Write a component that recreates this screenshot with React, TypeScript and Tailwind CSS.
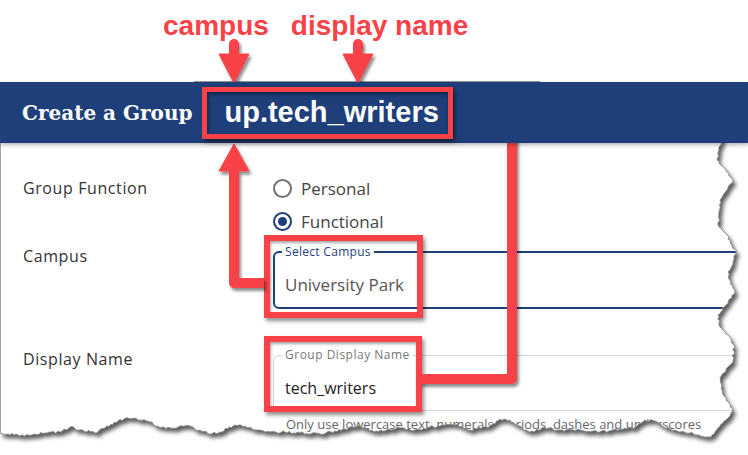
import React from 'react';

function rng(seed: number) {
  let s = seed;
  return () => {
    s = (s * 16807) % 2147483647;
    return (s - 1) / 2147483646;
  };
}

const rightAnchors: [number, number][] = [
  [737, 82], [734, 92], [729, 100], [724, 108], [717, 118], [719, 128], [722, 140], [719, 150],
  [717, 160], [726, 170], [733, 180], [727, 190], [720, 200], [719, 212], [718, 225], [727, 235],
  [732, 245], [736, 252], [733, 262], [728, 272], [731, 282], [735, 292], [726, 305], [718, 315],
  [719, 325], [728, 335], [734, 345], [733, 360], [726, 370], [720, 378], [722, 390], [726, 400],
  [733, 410], [728, 418], [718, 428], [711, 437],
];

const bottomAnchors: [number, number][] = [
  [711, 437], [690, 433], [675, 430], [662, 426], [655, 421], [645, 420], [636, 427], [620, 429],
  [600, 432], [580, 430], [560, 430], [545, 428], [530, 432], [518, 426], [510, 420], [500, 419],
  [490, 426], [470, 430], [455, 425], [440, 426], [430, 427], [415, 430], [400, 428], [385, 431],
  [374, 432], [360, 426], [345, 429], [335, 431], [320, 434], [300, 433], [285, 432], [270, 432],
  [255, 430], [245, 426], [235, 425], [220, 432], [210, 434], [200, 430], [185, 426], [170, 428],
  [160, 428], [150, 422], [140, 420], [128, 418], [118, 421], [105, 428], [95, 433], [80, 430],
  [70, 427], [60, 432], [45, 433], [35, 434], [20, 436], [8, 434], [0, 433],
];

function jag(anchors: [number, number][], seed: number, axis: 'x' | 'y') {
  const r = rng(seed);
  const pts: [number, number][] = [];
  for (let i = 0; i < anchors.length - 1; i++) {
    const [x0, y0] = anchors[i];
    const [x1, y1] = anchors[i + 1];
    const len = Math.hypot(x1 - x0, y1 - y0);
    const n = Math.max(1, Math.round(len / 2.2));
    for (let k = 0; k < n; k++) {
      const t = k / n;
      let x = x0 + (x1 - x0) * t;
      let y = y0 + (y1 - y0) * t;
      const j = (r() - 0.5) * 2.6;
      if (k > 0) {
        if (axis === 'x') x += j;
        else y += j;
      }
      pts.push([x, y]);
    }
  }
  pts.push(anchors[anchors.length - 1]);
  return pts;
}

const edge = [...jag(rightAnchors, 7, 'x'), ...jag(bottomAnchors, 13, 'y').slice(1)];
const edgeStr = edge.map(([x, y]) => `${x.toFixed(1)} ${y.toFixed(1)}`).join(' L ');
const outsidePath = `M ${edgeStr} L 0 455 L 748 455 L 748 82 Z`;
const keptPath = `M 0 82 L ${edgeStr} Z`;
const edgeLine = `M ${edgeStr}`;

const RED = '#f94247';

function Arrows() {
  return (
    <svg className="absolute left-0 top-0 pointer-events-none" width={748} height={455} viewBox="0 0 748 455">
      <defs>
        <filter id="ash" x="-20%" y="-20%" width="140%" height="140%">
          <feDropShadow dx="2" dy="3" stdDeviation="1.6" floodColor="#000" floodOpacity="0.45" />
        </filter>
      </defs>
      <g filter="url(#ash)" fill={RED} stroke={RED}>
        {/* campus down arrow */}
        <path d="M234 44 V56" strokeWidth={10} strokeLinecap="round" fill="none" />
        <polygon points="219,54 249,54 234,83" strokeWidth={1} strokeLinejoin="round" />
        {/* display name down arrow */}
        <path d="M358 44 V56" strokeWidth={10} strokeLinecap="round" fill="none" />
        <polygon points="343,54 373,54 358,83" strokeWidth={1} strokeLinejoin="round" />
        {/* up arrow from campus box */}
        <path d="M264 283 H234 V168" strokeWidth={10} strokeLinejoin="round" fill="none" />
        <polygon points="219,171 249,171 234,144" strokeWidth={1} strokeLinejoin="round" />
        {/* display box to header box */}
        <path d="M420 379 H512 V112 H482" strokeWidth={10} strokeLinejoin="round" fill="none" />
        <polygon points="484,97 484,127 455,112" strokeWidth={1} strokeLinejoin="round" />
      </g>
    </svg>
  );
}

function Tear() {
  return (
    <svg className="absolute left-0 top-0 pointer-events-none" width={748} height={455} viewBox="0 0 748 455">
      <defs>
        <clipPath id="outside">
          <path d={outsidePath} />
        </clipPath>
        <filter id="blur" x="-10%" y="-10%" width="120%" height="120%">
          <feGaussianBlur stdDeviation="2" />
        </filter>
      </defs>
      <path d={outsidePath} fill="#ffffff" />
      <g clipPath="url(#outside)">
        <path d={keptPath} fill="#000" opacity={0.65} filter="url(#blur)" transform="translate(3 4)" />
      </g>
      <path d={edgeLine} fill="none" stroke="#8c8c8c" strokeWidth={0.9} />
    </svg>
  );
}

export default function App() {
  return (
    <div className="relative w-[748px] h-[455px] bg-white overflow-hidden" style={{ fontFamily: '"Open Sans", sans-serif' }}>
      {/* annotation labels */}
      <div className="relative h-[82px] flex pl-[163px] pt-[12px] gap-[22px] text-[28px] leading-none font-bold text-[#f94247]" style={{ fontFamily: '"Liberation Sans", Arial, sans-serif' }}>
        <span>campus</span>
        <span>display name</span>
        <div className="absolute left-[194px] bottom-0 w-[346px] h-px bg-[#9a9a9a]" />
      </div>

      {/* header */}
      <div className="relative z-10 h-[61px] bg-[#1e3f7a] flex items-center pl-[22px] shadow-[0_2px_4px_rgba(0,0,0,0.3)]">
        <span className="text-white font-bold text-[20px] leading-none" style={{ fontFamily: '"DejaVu Serif", serif' }}>
          Create a Group
        </span>
        <div className="ml-[10px] w-[251px] h-[52px] border-[5px] border-[#f94247] flex items-center pl-[17px] shadow-[2px_3px_4px_rgba(0,0,0,0.5),inset_1px_2px_4px_rgba(0,0,0,0.45)]">
          <span className="text-white font-bold text-[29px] leading-none" style={{ fontFamily: '"Liberation Sans", Arial, sans-serif' }}>
            up.tech_writers
          </span>
        </div>
      </div>

      {/* form body */}
      <div className="border-l border-[#a3a3a3] h-[312px] pt-[29px]">
        {/* group function */}
        <div className="flex">
          <div className="w-[272px] shrink-0 pl-[22px] h-[33px] leading-[33px] text-[16px] tracking-[0.6px] text-[#333]">Group Function</div>
          <div className="flex flex-col">
            <div className="h-[33px] flex items-center gap-[9px]">
              <div className="w-[19px] h-[19px] rounded-full border-2 border-[#707070]" />
              <span className="text-[17px] text-[#444]">Personal</span>
            </div>
            <div className="h-[33px] flex items-center gap-[9px]">
              <div className="w-[19px] h-[19px] rounded-full border-2 border-[#1e3f7a] flex items-center justify-center">
                <div className="w-[9px] h-[9px] rounded-full bg-[#1e3f7a]" />
              </div>
              <span className="text-[17px] text-[#444]">Functional</span>
            </div>
          </div>
        </div>

        {/* campus */}
        <div className="flex mt-[6px]">
          <div className="w-[272px] shrink-0 pl-[22px] leading-[24px] text-[16px] tracking-[0.6px] text-[#333]">Campus</div>
          <fieldset className="w-[490px] shrink-0 border-2 border-[#1e3f7a] rounded-[6px] pl-[10px] pb-[10px]">
            <legend className="-ml-[3px] px-[3px] text-[12px] tracking-[0.3px] leading-[16px] text-[#1e3f7a]">Select Campus</legend>
            <div className="mt-[13px] text-[17px] leading-[24px] text-[#555]">University Park</div>
          </fieldset>
        </div>

        {/* display name */}
        <div className="flex mt-[38px]">
          <div className="w-[272px] shrink-0 pl-[22px] leading-[24px] text-[16px] tracking-[0.6px] text-[#333]">Display Name</div>
          <div className="flex flex-col shrink-0">
            <fieldset className="w-[490px] shrink-0 border border-[#d6d6d6] rounded-[6px] pl-[11px] pb-[10px]">
              <legend className="-ml-[3px] px-[3px] text-[12px] tracking-[0.5px] leading-[16px] text-[#777]">Group Display Name</legend>
              <div className="mt-[13px] text-[16px] leading-[24px] text-[#222]">tech_writers</div>
            </fieldset>
            <div className="mt-[4px] pl-[13px] text-[13px] leading-[18px] text-[#666] whitespace-nowrap">
              Only use lowercase text, numerals, periods, dashes and underscores
            </div>
          </div>
        </div>
      </div>

      {/* red highlight boxes over fields */}
      <div className="absolute left-[264px] top-[235px] w-[159px] h-[83px] border-[6px] border-[#f94247] shadow-[2px_3px_4px_rgba(0,0,0,0.45),inset_1px_2px_3px_rgba(0,0,0,0.35)]" />
      <div className="absolute left-[264px] top-[336px] w-[158px] h-[76px] border-[6px] border-[#f94247] shadow-[2px_3px_4px_rgba(0,0,0,0.45),inset_1px_2px_3px_rgba(0,0,0,0.35)]" />

      <Arrows />
      <Tear />
    </div>
  );
}
